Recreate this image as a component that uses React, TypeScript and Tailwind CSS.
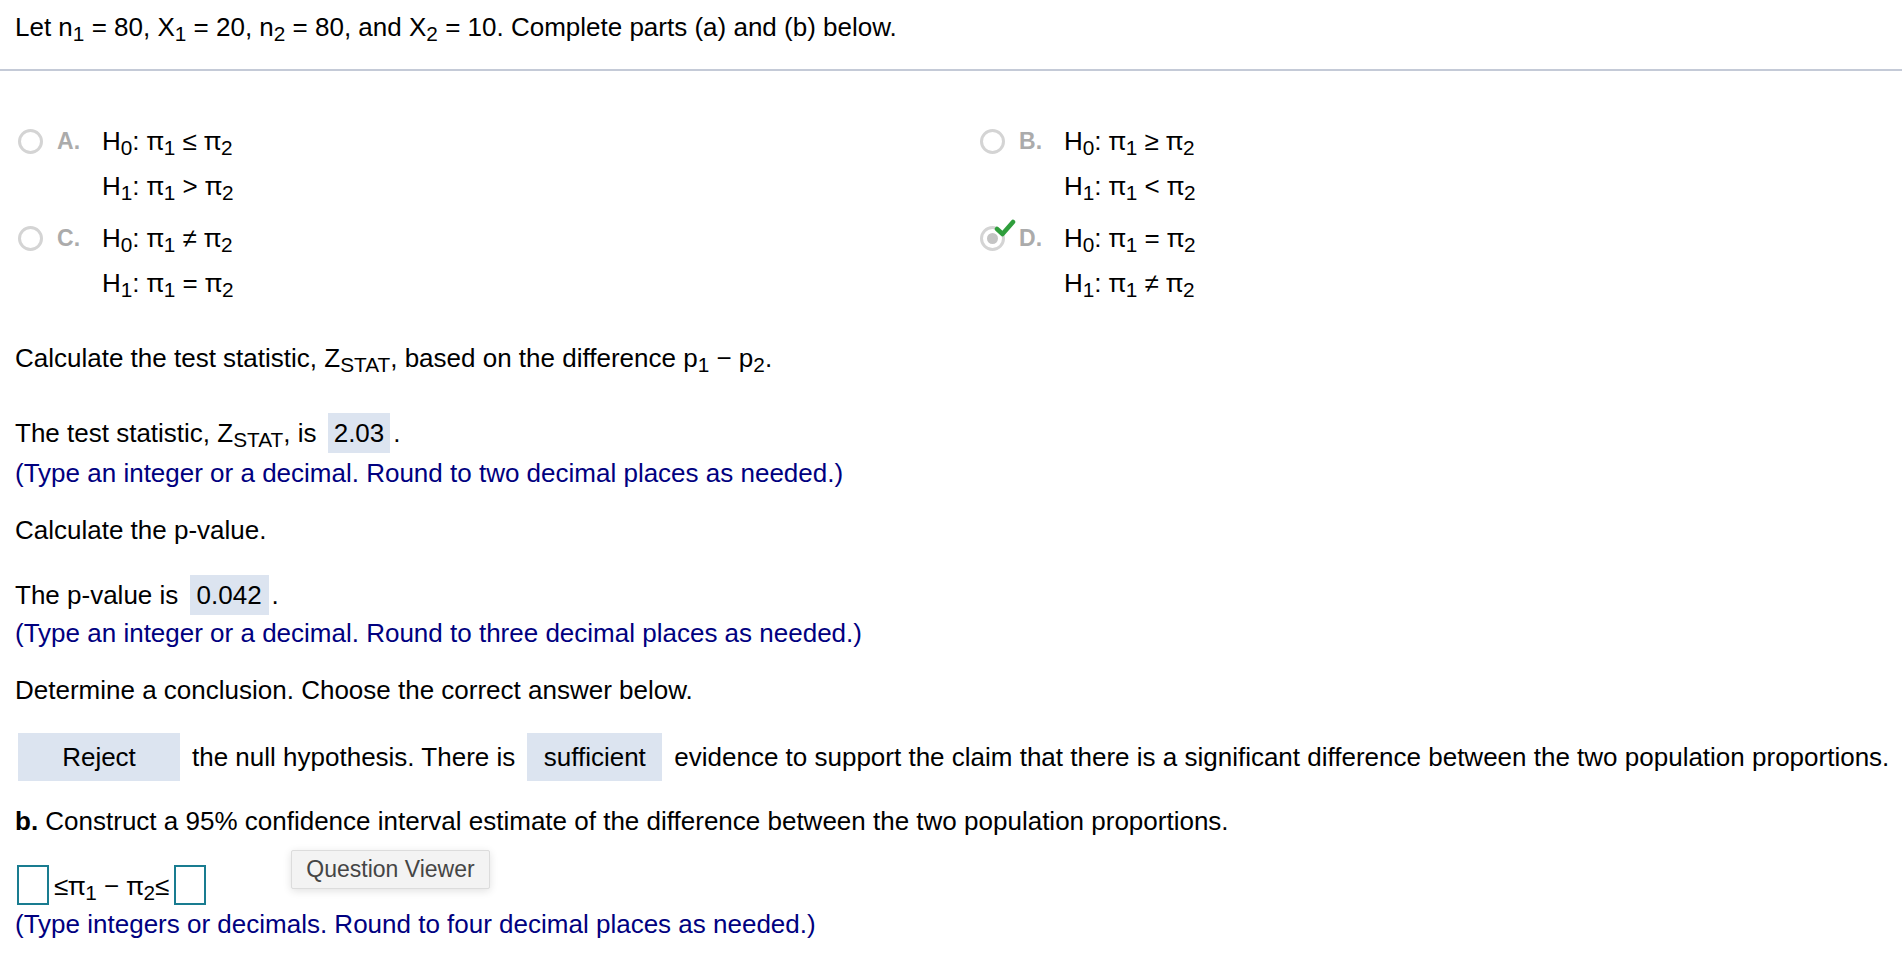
import React from "react";

function Sub({ children }: { children: React.ReactNode }) {
  return <sub className="text-[0.8em]">{children}</sub>;
}

// pi glyph with a curled leg, closer to the reference than Liberation's
const Pi = () => <span className="font-['Noto_Sans',sans-serif] leading-none">π</span>;

function Radio({ checked }: { checked?: boolean }) {
  return (
    <span className="relative inline-flex h-[25px] w-[25px] shrink-0 items-center justify-center rounded-full border-[3px] border-[#d4d4d4] bg-white">
      {checked && <span className="h-[11px] w-[11px] rounded-full bg-[#c4c4c4]" />}
      {checked && (
        <svg className="absolute left-[11px] top-[-10px]" width="22" height="19" viewBox="0 0 22 19">
          <path d="M3 10 L8.5 15 L19 3" fill="none" stroke="#2f9e3c" strokeWidth="4.5" strokeLinecap="round" strokeLinejoin="round" />
        </svg>
      )}
    </span>
  );
}

function Option({ letter, h0, h1, checked }: { letter: string; h0: React.ReactNode; h1: React.ReactNode; checked?: boolean }) {
  return (
    <div className="flex">
      <div className="flex h-[45px] items-center">
        <Radio checked={checked} />
      </div>
      <div className="ml-[14px] flex h-[45px] w-[45px] items-center text-[23px] font-bold text-[#ababab]">{letter}.</div>
      <div className="leading-[45px]">
        <div className="h-[45px]">{h0}</div>
        <div className="h-[45px]">{h1}</div>
      </div>
    </div>
  );
}

const Answer = ({ children, className = "" }: { children: React.ReactNode; className?: string }) => (
  <span className={`inline-block bg-[#dce4f0] ${className}`}>{children}</span>
);

export default function App() {
  return (
    <div className="relative min-h-screen bg-white font-['Liberation_Sans',Arial,sans-serif] text-[26px] text-black">
      <div className="pl-[15px] pt-[7px] leading-[40px]">
        Let n<Sub>1</Sub> = 80, X<Sub>1</Sub> = 20, n<Sub>2</Sub> = 80, and X<Sub>2</Sub> = 10. Complete parts (a) and (b) below.
      </div>
      <div className="mt-[22px] h-[2px] bg-[#c4cad7]" />

      <div className="mt-[48px] grid grid-cols-[962px_1fr] gap-y-[7px] pl-[18px]">
        <Option
          letter="A"
          h0={<>H<Sub>0</Sub>: <Pi /><Sub>1</Sub> ≤ <Pi /><Sub>2</Sub></>}
          h1={<>H<Sub>1</Sub>: <Pi /><Sub>1</Sub> &gt; <Pi /><Sub>2</Sub></>}
        />
        <Option
          letter="B"
          h0={<>H<Sub>0</Sub>: <Pi /><Sub>1</Sub> ≥ <Pi /><Sub>2</Sub></>}
          h1={<>H<Sub>1</Sub>: <Pi /><Sub>1</Sub> &lt; <Pi /><Sub>2</Sub></>}
        />
        <Option
          letter="C"
          h0={<>H<Sub>0</Sub>: <Pi /><Sub>1</Sub> ≠ <Pi /><Sub>2</Sub></>}
          h1={<>H<Sub>1</Sub>: <Pi /><Sub>1</Sub> = <Pi /><Sub>2</Sub></>}
        />
        <Option
          letter="D"
          checked
          h0={<>H<Sub>0</Sub>: <Pi /><Sub>1</Sub> = <Pi /><Sub>2</Sub></>}
          h1={<>H<Sub>1</Sub>: <Pi /><Sub>1</Sub> ≠ <Pi /><Sub>2</Sub></>}
        />
      </div>

      <div className="pl-[15px]">
        <div className="mt-[32px] h-[40px] leading-[40px]">
          Calculate the test statistic, Z<Sub>STAT</Sub>, based on the difference p<Sub>1</Sub> − p<Sub>2</Sub>.
        </div>

        <div className="mt-[35px] h-[40px] leading-[40px]">
          The test statistic, Z<Sub>STAT</Sub>, is <Answer className="ml-[4px] px-[6px]">2.03</Answer>
          <span className="ml-[3px]">.</span>
        </div>
        <div className="leading-[40px] text-[#000080]">(Type an integer or a decimal. Round to two decimal places as needed.)</div>

        <div className="mt-[17px] leading-[40px]">Calculate the p-value.</div>

        <div className="mt-[25px] h-[40px] leading-[40px]">
          The p-value is <Answer className="ml-[4px] px-[7px]">0.042</Answer>
          <span className="ml-[3px]">.</span>
        </div>
        <div className="leading-[36px] text-[#000080]">(Type an integer or a decimal. Round to three decimal places as needed.)</div>

        <div className="mt-[19px] leading-[40px]">Determine a conclusion. Choose the correct answer below.</div>

        <div className="ml-[3px] mt-[23px] flex h-[48px] items-center gap-[12px]">
          <div className="flex h-full w-[162px] items-center justify-center bg-[#dce4f0]">Reject</div>
          <span>the null hypothesis. There is</span>
          <div className="flex h-full w-[135px] items-center justify-center bg-[#dce4f0]">sufficient</div>
          <span>evidence to support the claim that there is a significant difference between the two population proportions.</span>
        </div>

        <div className="mt-[20px] leading-[40px]">
          <span className="font-bold">b.</span> Construct a 95% confidence interval estimate of the difference between the two population proportions.
        </div>

        <div className="ml-[2px] mt-[24px] flex h-[40px] items-center">
          <span className="h-[40px] w-[32px] border-2 border-[#197c90]" />
          <span className="mx-[5px] leading-none">
            ≤<Pi /><Sub>1</Sub> − <Pi /><Sub>2</Sub>≤
          </span>
          <span className="h-[40px] w-[32px] border-2 border-[#197c90]" />
        </div>
        <div className="leading-[38px] text-[#000080]">(Type integers or decimals. Round to four decimal places as needed.)</div>
      </div>

      <div className="absolute left-[291px] top-[850px] flex h-[39px] w-[199px] items-center justify-center rounded-[2px] border border-[#dcdcdc] bg-[#f3f3f3] text-[23px] text-[#454545] shadow-[0_2px_8px_rgba(0,0,0,0.12)]">
        Question Viewer
      </div>
    </div>
  );
}
